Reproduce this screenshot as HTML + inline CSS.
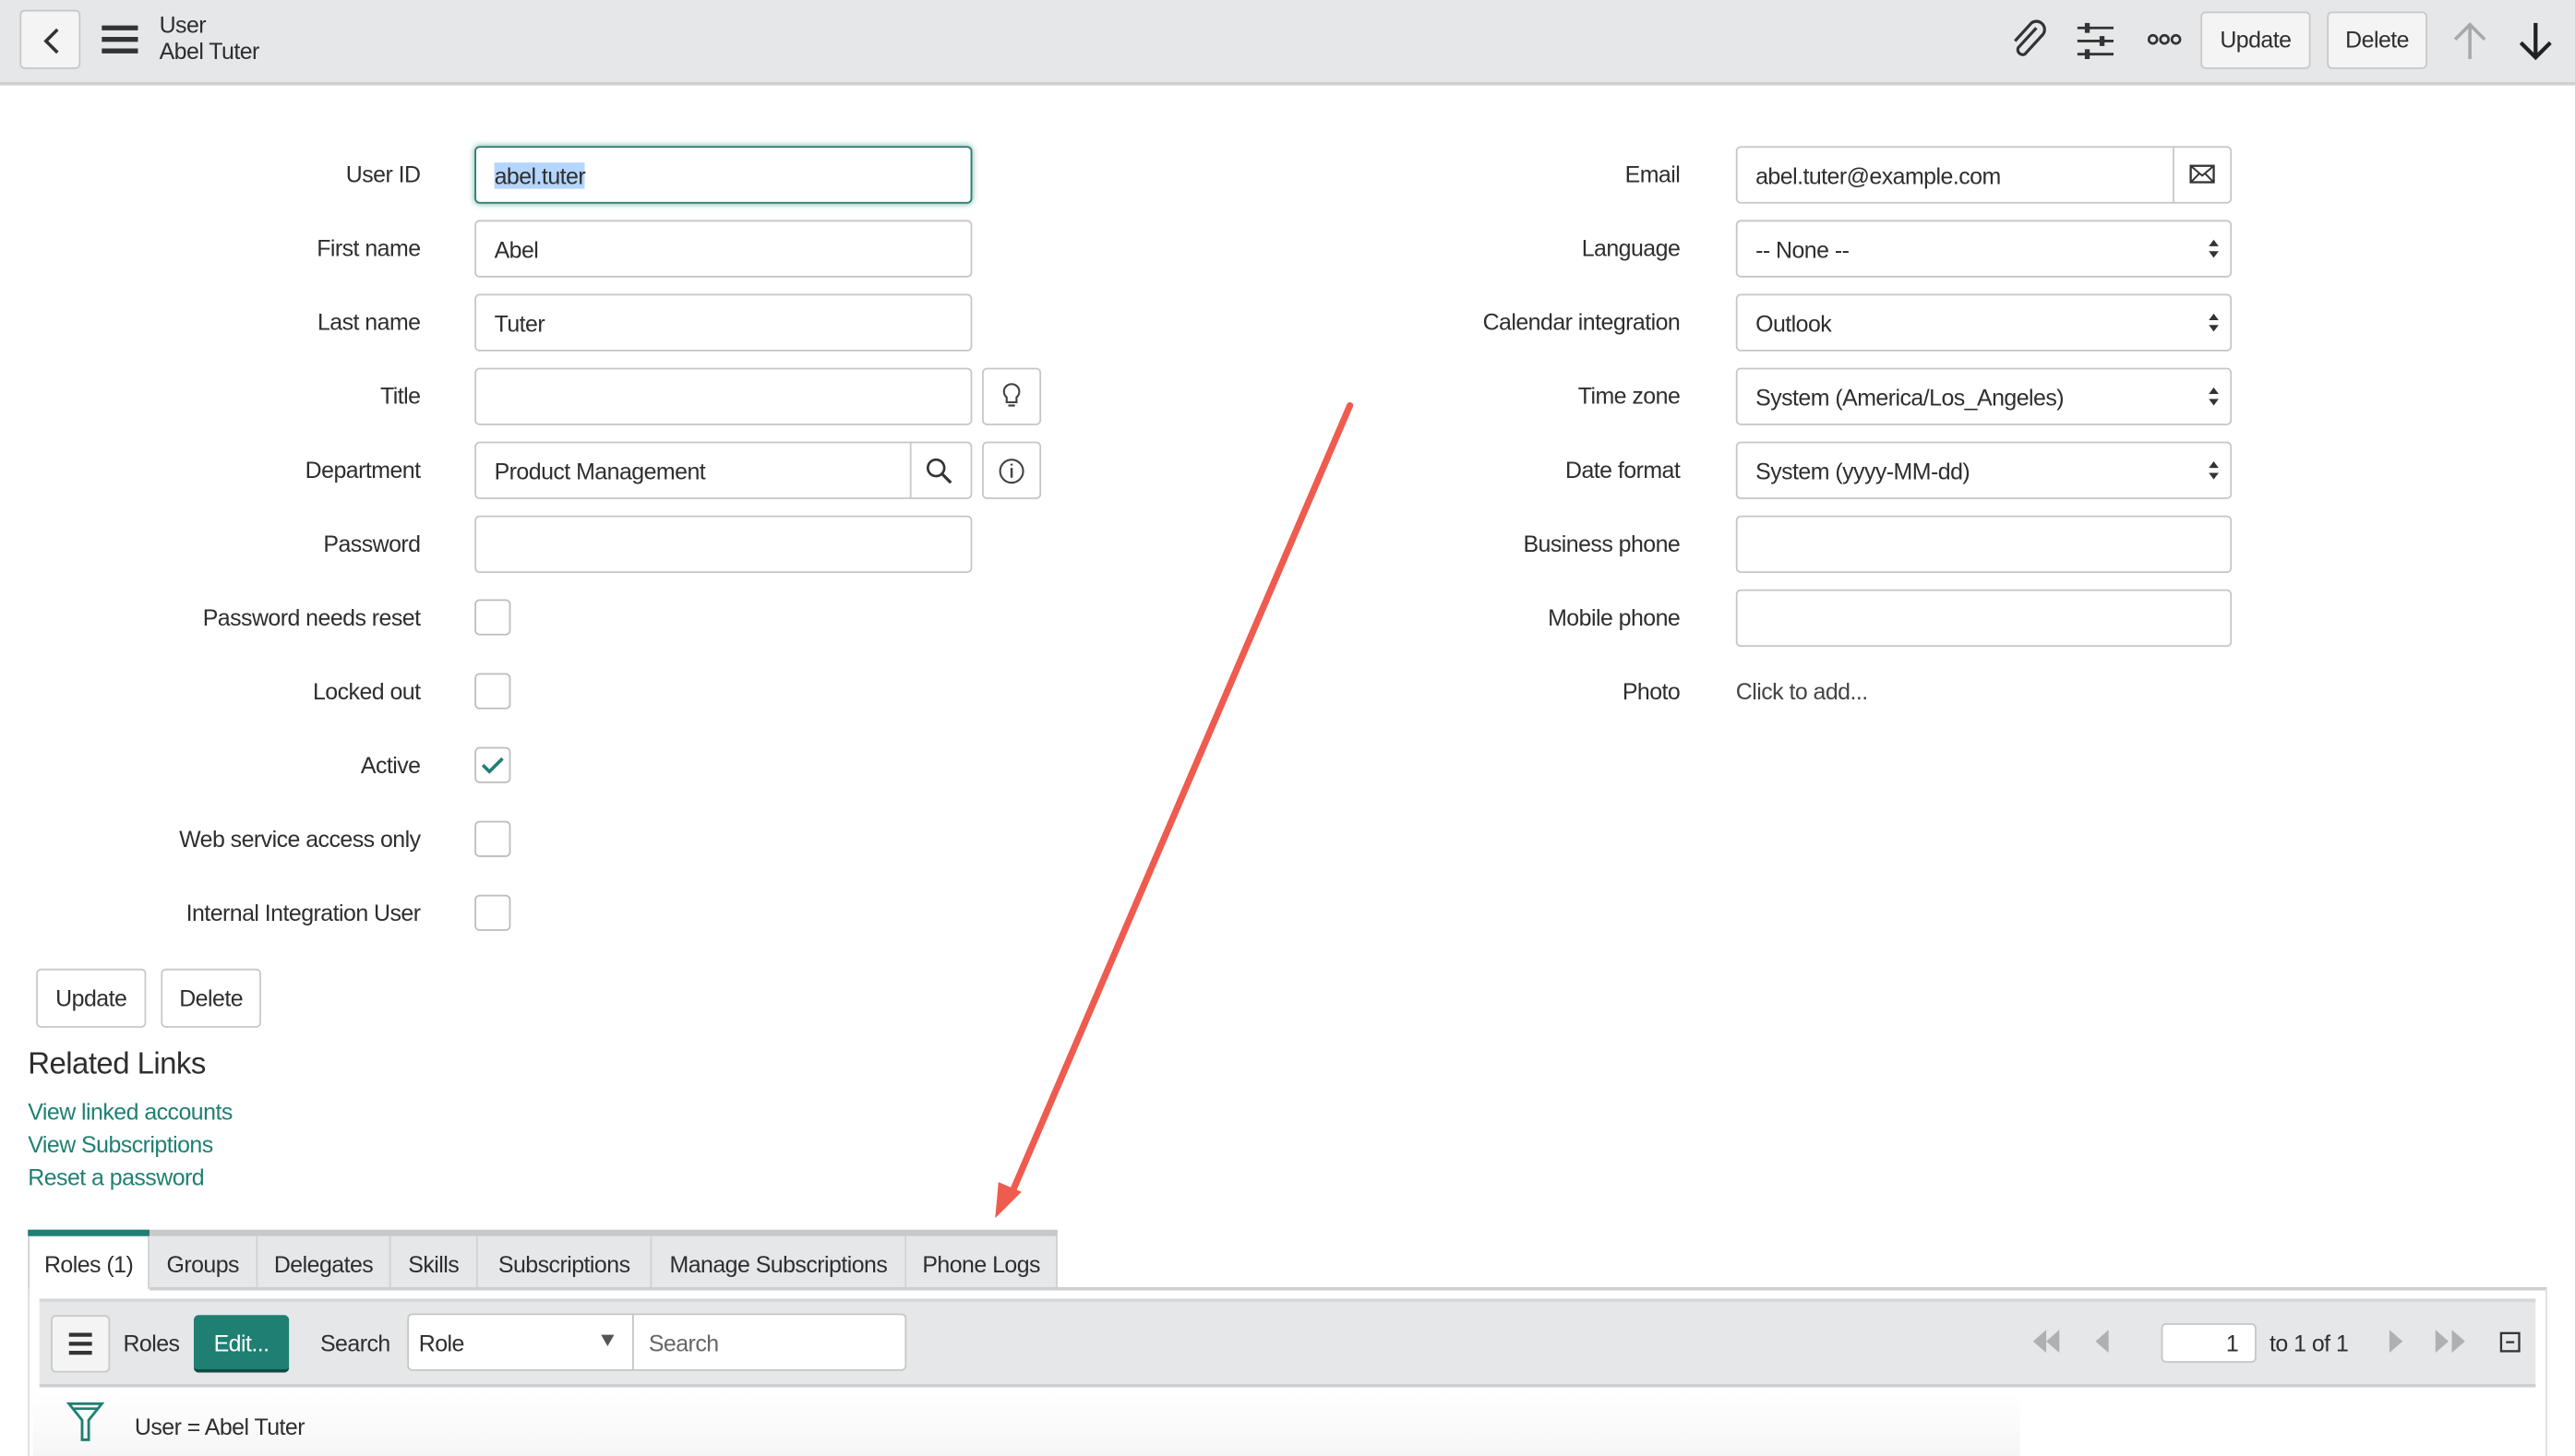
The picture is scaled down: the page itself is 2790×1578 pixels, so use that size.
<!DOCTYPE html>
<html><head><style>
html,body{margin:0;padding:0;background:#fff;overflow:hidden;width:2790px;height:1578px}
#w{width:1568px;height:887px;transform:scale(1.77934);transform-origin:0 0;position:relative;font-family:"Liberation Sans",sans-serif;font-size:13.5px;color:#2e2e2e;letter-spacing:-0.3px}
.a{position:absolute}
.hdr{left:0;top:0;width:1568px;height:50px;background:#e6e7e8;border-bottom:2px solid #cfcfcf}
.btn{position:absolute;background:#f4f4f4;border:1px solid #c8c8c8;border-radius:3px;box-sizing:border-box;text-align:center;font-size:14px}
.lbl{position:absolute;text-align:right;width:250px;font-size:14px}
.rl{position:absolute;text-align:right;width:300px;font-size:14px}
.inp{position:absolute;height:35px;border:1px solid #c6c6c6;border-radius:3px;box-sizing:border-box;background:#fff;font-size:14px;padding:9px 11px 0}
.cb{position:absolute;width:22px;height:22px;border:1px solid #bdbdbd;border-radius:3px;box-sizing:border-box;background:#fff}
.sel:after{content:"";position:absolute;right:7px;top:11px;border:3.5px solid transparent;border-bottom:4px solid #333;border-top:0}
.sel:before{content:"";position:absolute;right:7px;top:18px;border:3.5px solid transparent;border-top:4px solid #333;border-bottom:0}
.lnk{position:absolute;left:17px;color:#1f7f73;font-size:14px}
.tab{position:absolute;top:753px;height:32px;background:#e6e7e8;border-right:1px solid #d0d0d0;box-sizing:border-box;font-size:14px;padding-top:9px;text-align:center}
</style></head><body><div id="w">
<div class="a hdr"></div>
<div class="btn" style="left:12px;top:6px;width:37px;height:36px"><svg width="37" height="36"><path d="M22 11l-7 7 7 7" fill="none" stroke="#333" stroke-width="2"/></svg></div>
<svg class="a" style="left:61px;top:14px" width="24" height="20"><path d="M1 3h22M1 10h22M1 17h22" stroke="#333" stroke-width="3"/></svg>
<div class="a" style="left:97px;top:7px;font-size:14px;line-height:16px">User<br>Abel Tuter</div>
<svg class="a" style="left:1222px;top:12px" width="26" height="26"><path d="M18 5l-11 12a3 3 0 0 0 4 4l11-12a5 5 0 0 0-7-7l-10 11" fill="none" stroke="#333" stroke-width="1.8"/></svg>
<svg class="a" style="left:1264px;top:12px" width="24" height="26"><path d="M1 5h22M1 13h22M1 21h22" stroke="#333" stroke-width="1.6"/><path d="M7 2v6M16 10v6M7 18v6" stroke="#333" stroke-width="3"/></svg>
<svg class="a" style="left:1306px;top:18px" width="24" height="12"><circle cx="5" cy="6" r="2.5" fill="none" stroke="#333" stroke-width="1.5"/><circle cx="12" cy="6" r="2.5" fill="none" stroke="#333" stroke-width="1.5"/><circle cx="19" cy="6" r="2.5" fill="none" stroke="#333" stroke-width="1.5"/></svg>
<div class="btn" style="left:1340px;top:7px;width:67px;height:35px;padding-top:8px">Update</div>
<div class="btn" style="left:1417px;top:7px;width:61px;height:35px;padding-top:8px">Delete</div>
<svg class="a" style="left:1492px;top:12px" width="24" height="26"><path d="M12 24V3M3 12l9-9 9 9" fill="none" stroke="#a8a8a8" stroke-width="2"/></svg>
<svg class="a" style="left:1532px;top:12px" width="24" height="26"><path d="M12 2v21M3 14l9 9 9-9" fill="none" stroke="#222" stroke-width="2.4"/></svg>

<div class="lbl" style="left:6px;top:98px">User ID</div>
<div class="inp" style="left:289px;top:89px;width:303px;border:1.5px solid #2a7a6d;box-shadow:0 0 4px #6bb3a7"><span style="background:#b4d5fe">abel.tuter</span></div>
<div class="lbl" style="left:6px;top:143px">First name</div>
<div class="inp" style="left:289px;top:134px;width:303px">Abel</div>
<div class="lbl" style="left:6px;top:188px">Last name</div>
<div class="inp" style="left:289px;top:179px;width:303px">Tuter</div>
<div class="lbl" style="left:6px;top:233px">Title</div>
<div class="inp" style="left:289px;top:224px;width:303px"></div>
<div class="inp" style="left:598px;top:224px;width:36px;padding:0"><svg width="34" height="33"><path d="M17 9a4.5 4.5 0 0 0-3 8v3h6v-3a4.5 4.5 0 0 0-3-8zM15 22h4" fill="none" stroke="#444" stroke-width="1.2"/></svg></div>
<div class="lbl" style="left:6px;top:278px">Department</div>
<div class="inp" style="left:289px;top:269px;width:303px">Product Management</div>
<div class="a" style="left:554px;top:269px;width:1px;height:35px;background:#c6c6c6"></div>
<svg class="a" style="left:563px;top:278px" width="18" height="18"><circle cx="7" cy="7" r="5" fill="none" stroke="#333" stroke-width="1.5"/><path d="M11 11l5 5" stroke="#333" stroke-width="1.8"/></svg>
<div class="inp" style="left:598px;top:269px;width:36px;padding:0"><svg width="34" height="33"><circle cx="17" cy="17" r="7" fill="none" stroke="#444" stroke-width="1.2"/><path d="M17 15v6M17 12.5v1" stroke="#444" stroke-width="1.4"/></svg></div>
<div class="lbl" style="left:6px;top:323px">Password</div>
<div class="inp" style="left:289px;top:314px;width:303px"></div>
<div class="lbl" style="left:6px;top:368px">Password needs reset</div><div class="cb" style="left:289px;top:365px"></div>
<div class="lbl" style="left:6px;top:413px">Locked out</div><div class="cb" style="left:289px;top:410px"></div>
<div class="lbl" style="left:6px;top:458px">Active</div><div class="cb" style="left:289px;top:455px"><svg width="20" height="20"><path d="M4 10l4 4 8-8" fill="none" stroke="#1f7f73" stroke-width="2"/></svg></div>
<div class="lbl" style="left:6px;top:503px">Web service access only</div><div class="cb" style="left:289px;top:500px"></div>
<div class="lbl" style="left:6px;top:548px">Internal Integration User</div><div class="cb" style="left:289px;top:545px"></div>

<div class="rl" style="left:723px;top:98px">Email</div>
<div class="inp" style="left:1057px;top:89px;width:302px">abel.tuter@example.com</div>
<div class="a" style="left:1323px;top:89px;width:1px;height:35px;background:#c6c6c6"></div>
<svg class="a" style="left:1333px;top:100px" width="16" height="13"><rect x="1" y="1" width="14" height="10" fill="none" stroke="#333" stroke-width="1.3"/><path d="M1 1l7 6 7-6M1 11l5-5M15 11l-5-5" fill="none" stroke="#333" stroke-width="1.1"/></svg>
<div class="rl" style="left:723px;top:143px">Language</div>
<div class="inp sel" style="left:1057px;top:134px;width:302px">-- None --</div>
<div class="rl" style="left:723px;top:188px">Calendar integration</div>
<div class="inp sel" style="left:1057px;top:179px;width:302px">Outlook</div>
<div class="rl" style="left:723px;top:233px">Time zone</div>
<div class="inp sel" style="left:1057px;top:224px;width:302px">System (America/Los_Angeles)</div>
<div class="rl" style="left:723px;top:278px">Date format</div>
<div class="inp sel" style="left:1057px;top:269px;width:302px">System (yyyy-MM-dd)</div>
<div class="rl" style="left:723px;top:323px">Business phone</div>
<div class="inp" style="left:1057px;top:314px;width:302px"></div>
<div class="rl" style="left:723px;top:368px">Mobile phone</div>
<div class="inp" style="left:1057px;top:359px;width:302px"></div>
<div class="rl" style="left:723px;top:413px">Photo</div>
<div class="a" style="left:1057px;top:413px;font-size:14px;color:#444">Click to add...</div>

<div class="btn" style="left:22px;top:590px;width:67px;height:36px;padding-top:9px;background:#fff">Update</div>
<div class="btn" style="left:98px;top:590px;width:61px;height:36px;padding-top:9px;background:#fff">Delete</div>
<div class="a" style="left:17px;top:637px;font-size:18.5px">Related Links</div>
<div class="lnk" style="top:669px">View linked accounts</div>
<div class="lnk" style="top:689px">View Subscriptions</div>
<div class="lnk" style="top:709px">Reset a password</div>

<div class="a" style="left:17px;top:749px;width:627px;height:4px;background:#c9c9c9"></div>
<div class="a" style="left:17px;top:749px;width:74px;height:4px;background:#1f7f73"></div>
<div class="tab" style="left:17px;width:74px;background:#fff;border-left:1px solid #d0d0d0">Roles (1)</div>
<div class="tab" style="left:91px;width:66px">Groups</div>
<div class="tab" style="left:157px;width:81px">Delegates</div>
<div class="tab" style="left:238px;width:53px">Skills</div>
<div class="tab" style="left:291px;width:106px">Subscriptions</div>
<div class="tab" style="left:397px;width:155px">Manage Subscriptions</div>
<div class="tab" style="left:552px;width:92px">Phone Logs</div>
<div class="a" style="left:91px;top:784px;width:1460px;height:2px;background:#cfcfcf"></div>
<div class="a" style="left:17px;top:785px;width:1px;height:102px;background:#ddd"></div>
<div class="a" style="left:1550px;top:785px;width:1px;height:102px;background:#ddd"></div>
<div class="a" style="left:24px;top:791px;width:1520px;height:54px;background:#e6e7e8;border-top:2px solid #d5d8d8;border-bottom:2px solid #cfcfcf;box-sizing:border-box"></div>
<div class="btn" style="left:31px;top:801px;width:36px;height:35px"><svg width="34" height="33"><path d="M10 11h14M10 16.5h14M10 22h14" stroke="#333" stroke-width="2.4"/></svg></div>
<div class="a" style="left:75px;top:810px;font-size:14px">Roles</div>
<div class="a" style="left:118px;top:801px;width:58px;height:35px;background:#1f7f73;border-radius:3px;border-bottom:2px solid #0e4a42;box-sizing:border-box;color:#fff;text-align:center;padding-top:9px;font-size:14px">Edit...</div>
<div class="a" style="left:195px;top:810px;font-size:14px">Search</div>
<div class="inp" style="left:248px;top:800px;width:304px;padding-top:9px;padding-left:6px">Role</div>
<div class="a" style="left:366px;top:813px;border:4px solid transparent;border-top:7px solid #555;border-bottom:0"></div>
<div class="a" style="left:385px;top:800px;width:1px;height:35px;background:#c6c6c6"></div>
<div class="a" style="left:395px;top:810px;font-size:14px;color:#666">Search</div>
<svg class="a" style="left:1236px;top:809px" width="60" height="16"><path d="M10 1v14L2 8zM18 1v14L10 8zM48 1v14L40 8z" fill="#b0b0b0"/></svg>
<div class="inp" style="left:1316px;top:806px;width:58px;height:24px;padding:3px 10px 0;text-align:right">1</div>
<div class="a" style="left:1382px;top:810px;font-size:14px">to 1 of 1</div>
<svg class="a" style="left:1453px;top:809px" width="60" height="16"><path d="M2 1v14l8-7zM30 1v14l8-7zM40 1v14l8-7z" fill="#b0b0b0"/></svg>
<svg class="a" style="left:1521px;top:810px" width="16" height="16"><rect x="2" y="2" width="11" height="11" fill="none" stroke="#333" stroke-width="1.3"/><path d="M5 7.5h5" stroke="#333" stroke-width="1.3"/></svg>
<div class="a" style="left:20px;top:848px;width:1210px;height:39px;background:linear-gradient(#fff,#f6f6f6)"></div>
<svg class="a" style="left:40px;top:853px" width="24" height="26"><path d="M2 2h20l-8 10v12h-4V12z" fill="none" stroke="#1f7f73" stroke-width="1.6"/><path d="M5 5h14" stroke="#1f7f73" stroke-width="1.5"/></svg>
<div class="a" style="left:82px;top:861px;font-size:14px">User = Abel Tuter</div>

<svg class="a" style="left:0;top:0" width="1568" height="887"><path d="M822 247L616 727" stroke="#ef5b4e" stroke-width="4" stroke-linecap="round"/><path d="M606 742l2-22 14 6z" fill="#ef5b4e"/></svg>
</div></body></html>
